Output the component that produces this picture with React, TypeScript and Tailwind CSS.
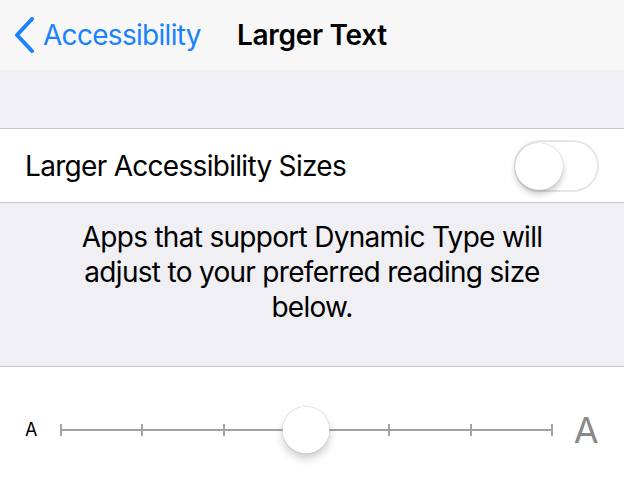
import React from "react";

const ticks = [0, 1, 2, 3, 4, 5, 6];

function Toggle() {
  return (
    <div className="relative w-[85px] h-[52px] rounded-full border-2 border-[#e6e6e6] bg-white">
      <div className="absolute left-[-1px] top-[1px] w-[48px] h-[47px] rounded-full bg-white shadow-[0_4px_6px_rgba(0,0,0,0.22),0_0_1px_rgba(0,0,0,0.3)]" />
    </div>
  );
}

function SizeSlider() {
  return (
    <div className="flex items-center h-[125px] pl-[25px] pr-[26px]">
      <span className="text-[18px] text-black w-[35px] leading-none">A</span>
      <div className="relative flex-1 h-[12px]">
        <div className="absolute left-0 right-0 top-[5px] h-[2px] bg-[#a2a2a2]" />
        {ticks.map((t) => (
          <div
            key={t}
            className="absolute top-0 w-[2px] h-[12px] bg-[#a2a2a2]"
            style={{ left: `calc(${(t / 6) * 100}% - ${t === 6 ? 2 : t === 0 ? 0 : 1}px)` }}
          />
        ))}
        <div className="absolute left-1/2 top-1/2 -translate-x-1/2 -translate-y-1/2 w-[47px] h-[47px] rounded-full bg-white shadow-[0_5px_8px_rgba(0,0,0,0.2),0_0_1px_rgba(0,0,0,0.35)]" />
      </div>
      <span className="ml-[21px] text-[36px] leading-none text-[#8a8a8a]">A</span>
    </div>
  );
}

export default function App() {
  return (
    <div className="w-[624px] h-[492px] overflow-hidden bg-[#efeff4] font-['Inter','Liberation_Sans',sans-serif] tracking-[-0.7px]">
      {/* navigation bar */}
      <div className="grid grid-cols-[1fr_auto_1fr] items-center h-[70px] bg-[#f7f7f7]">
        <div className="flex items-center pl-[14px] text-[#1a82fb]">
          <svg width="21" height="36" viewBox="0 0 21 36" fill="none">
            <path d="M18 2 L3 18 L18 34" stroke="#1a82fb" strokeWidth="4" strokeLinecap="round" strokeLinejoin="round" />
          </svg>
          <span className="ml-[8px] text-[28px]">Accessibility</span>
        </div>
        <div className="text-[28px] font-semibold tracking-[-0.3px] text-black">Larger Text</div>
        <div />
      </div>

      <div className="h-[58px]" />

      <div className="flex items-center justify-between h-[75px] bg-white border-y border-[#c8c7cc] pl-[25px] pr-[25px]">
        <span className="text-[28px] text-black">Larger Accessibility Sizes</span>
        <Toggle />
      </div>

      <div className="h-[163px] px-[60px] pt-[17px] text-center text-[28px] leading-[35px] text-black">
        Apps that support Dynamic Type will adjust to your preferred reading size below.
      </div>

      <div className="bg-white border-t border-[#c8c7cc]">
        <SizeSlider />
      </div>
    </div>
  );
}
